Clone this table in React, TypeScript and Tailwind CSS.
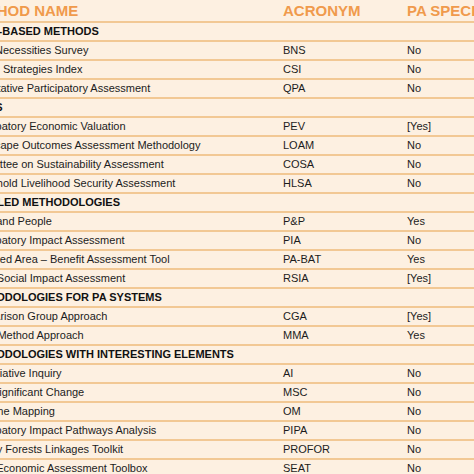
import React from "react";

type Row =
  | { kind: "section"; title: string }
  | { kind: "item"; name: string; acronym: string; pa: string };

const rows: Row[] = [
  { kind: "section", title: "INDEX-BASED METHODS" },
  { kind: "item", name: "Basic Necessities Survey", acronym: "BNS", pa: "No" },
  { kind: "item", name: "Coping Strategies Index", acronym: "CSI", pa: "No" },
  { kind: "item", name: "Quantitative Participatory Assessment", acronym: "QPA", pa: "No" },
  { kind: "section", title: "TOOLS" },
  { kind: "item", name: "Participatory Economic Valuation", acronym: "PEV", pa: "[Yes]" },
  { kind: "item", name: "Landscape Outcomes Assessment Methodology", acronym: "LOAM", pa: "No" },
  { kind: "item", name: "Committee on Sustainability Assessment", acronym: "COSA", pa: "No" },
  { kind: "item", name: "Household Livelihood Security Assessment", acronym: "HLSA", pa: "No" },
  { kind: "section", title: "DETAILED METHODOLOGIES" },
  { kind: "item", name: "Parks and People", acronym: "P&P", pa: "Yes" },
  { kind: "item", name: "Participatory Impact Assessment", acronym: "PIA", pa: "No" },
  { kind: "item", name: "Protected Area – Benefit Assessment Tool", acronym: "PA-BAT", pa: "Yes" },
  { kind: "item", name: "Rapid Social Impact Assessment", acronym: "RSIA", pa: "[Yes]" },
  { kind: "section", title: "METHODOLOGIES FOR PA SYSTEMS" },
  { kind: "item", name: "Comparison Group Approach", acronym: "CGA", pa: "[Yes]" },
  { kind: "item", name: "Mixed Method Approach", acronym: "MMA", pa: "Yes" },
  { kind: "section", title: "METHODOLOGIES WITH INTERESTING ELEMENTS" },
  { kind: "item", name: "Appreciative Inquiry", acronym: "AI", pa: "No" },
  { kind: "item", name: "Most Significant Change", acronym: "MSC", pa: "No" },
  { kind: "item", name: "Outcome Mapping", acronym: "OM", pa: "No" },
  { kind: "item", name: "Participatory Impact Pathways Analysis", acronym: "PIPA", pa: "No" },
  { kind: "item", name: "Poverty Forests Linkages Toolkit", acronym: "PROFOR", pa: "No" },
  { kind: "item", name: "Socio-Economic Assessment Toolbox", acronym: "SEAT", pa: "No" },
];

export default function App() {
  return (
    <div
      className="w-[474px] h-[474px] overflow-hidden bg-[#fdf0e1] text-[#1c1c1c]"
      style={{ fontFamily: '"Liberation Sans", Arial, sans-serif' }}
    >
      <div className="ml-[-35px] w-[560px]">
        <div className="flex h-[23px] items-center border-b-2 border-[#f2c894] text-[15px] font-bold leading-none text-[#f09a4c]">
          <div className="w-[318px] whitespace-nowrap">METHOD NAME</div>
          <div className="w-[124px] whitespace-nowrap">ACRONYM</div>
          <div className="whitespace-nowrap">PA SPECIFIC</div>
        </div>
        {rows.map((r, i) =>
          r.kind === "section" ? (
            <div
              key={i}
              className="flex h-[19px] items-center border-b-2 border-[#f2c894] text-[11px] font-bold leading-none text-[#111]"
            >
              <div className="whitespace-nowrap">{r.title}</div>
            </div>
          ) : (
            <div
              key={i}
              className="flex h-[19px] items-center border-b-2 border-[#f2c894] text-[11px] leading-none"
            >
              <div className="w-[318px] whitespace-nowrap">{r.name}</div>
              <div className="w-[124px] whitespace-nowrap">{r.acronym}</div>
              <div className="whitespace-nowrap">{r.pa}</div>
            </div>
          )
        )}
      </div>
    </div>
  );
}
